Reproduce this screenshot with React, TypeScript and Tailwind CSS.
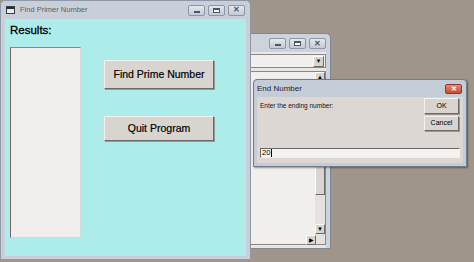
import React from "react";

function CaptionButtons() {
  return (
    <div className="flex items-center gap-[3px]">
      <div className="flex h-[11px] w-[17px] items-center justify-center rounded-[2px] border border-[#8c96a4] bg-gradient-to-b from-[#e4e8ee] to-[#c3cad4]">
        <div className="mt-[3px] h-[2px] w-[6px] border border-[#4b5563] bg-white" />
      </div>
      <div className="flex h-[11px] w-[17px] items-center justify-center rounded-[2px] border border-[#8c96a4] bg-gradient-to-b from-[#e4e8ee] to-[#c3cad4]">
        <div className="h-[5px] w-[7px] border border-[#4b5563] border-t-2 bg-white" />
      </div>
      <div className="flex h-[11px] w-[17px] items-center justify-center rounded-[2px] border border-[#8c96a4] bg-gradient-to-b from-[#e4e8ee] to-[#c3cad4] text-[8px] font-bold leading-none text-[#4b5563]">
        ✕
      </div>
    </div>
  );
}

function WinButton({ label, className }: { label: string; className: string }) {
  return (
    <div
      className={`flex items-center justify-center border border-t-[#f4f2f0] border-l-[#f4f2f0] border-r-[#6d6a68] border-b-[#6d6a68] bg-[#d8d4d0] shadow-[1px_1px_0_#9a9692] text-black ${className}`}
    >
      {label}
    </div>
  );
}

export default function App() {
  return (
    <div
      className="relative h-[262px] w-[474px] overflow-hidden bg-[#9f958b]"
      style={{ fontFamily: '"Liberation Sans", Arial, sans-serif' }}
    >
      {/* window behind */}
      <div className="absolute left-[236px] top-[33px] flex h-[216px] w-[95px] flex-col rounded-t-[5px] border border-[#7e8894] bg-[#cdd3dc]">
        <div className="flex h-[17px] items-center justify-end pr-[4px] pt-[2px]">
          <CaptionButtons />
        </div>
        <div className="mx-[4px] mt-[1px] flex flex-1 flex-col bg-[#e9e6e3] pb-[3px]">
          <div className="mt-[2px] flex h-[14px] items-center justify-end border border-[#8a8784] bg-[#f2f0ee] pr-[1px]">
            <div className="flex h-[11px] w-[11px] items-center justify-center border border-t-white border-l-white border-r-[#6d6a68] border-b-[#6d6a68] bg-[#d8d4d0] text-[6px] leading-none text-black">
              ▼
            </div>
          </div>
          <div className="mt-[3px] flex flex-1 border border-[#8a8784] bg-[#f1efed]">
            <div className="flex-1" />
            <div className="flex w-[10px] flex-col bg-[#e4e1de]">
              <div className="flex h-[10px] items-center justify-center border border-t-white border-l-white border-r-[#6d6a68] border-b-[#6d6a68] bg-[#d8d4d0] text-[6px] leading-none">
                ▲
              </div>
              <div className="h-[113px] border border-t-white border-l-white border-r-[#6d6a68] border-b-[#6d6a68] bg-[#d8d4d0]" />
              <div className="flex-1" />
              <div className="flex h-[10px] items-center justify-center border border-t-white border-l-white border-r-[#6d6a68] border-b-[#6d6a68] bg-[#d8d4d0] text-[6px] leading-none">
                ▼
              </div>
              <div className="h-[10px]" />
            </div>
          </div>
          <div className="relative -mt-[10px] flex h-[10px] justify-end pr-[10px]">
            <div className="flex h-[10px] w-[10px] items-center justify-center border border-t-white border-l-white border-r-[#6d6a68] border-b-[#6d6a68] bg-[#d8d4d0] text-[6px] leading-none">
              ▶
            </div>
          </div>
        </div>
      </div>

      {/* main window */}
      <div className="absolute left-0 top-0 flex h-[260px] w-[251px] flex-col rounded-t-[5px] border border-[#8e98a6] bg-[#c8cfd9]">
        <div className="flex h-[18px] items-center pl-[5px] pr-[5px]">
          <div className="relative mr-[5px] h-[8px] w-[9px] border border-[#3a3f47] bg-[#e9edf2]">
            <div className="absolute left-0 top-0 h-[2px] w-full bg-[#2a2f37]" />
          </div>
          <span className="text-[7.5px] text-[#5a626e]">Find Primer Number</span>
          <div className="ml-auto">
            <CaptionButtons />
          </div>
        </div>
        <div className="mx-[4px] mb-[3px] flex flex-1 bg-[#aeeceb] pl-[5px] pt-[4px]">
          <div className="flex flex-col">
            <span className="text-[11.5px] leading-[14px] text-black [-webkit-text-stroke:0.3px_black]">Results:</span>
            <div className="mt-[10px] h-[191px] w-[71px] border border-t-[#8a8784] border-l-[#6a6764] border-r-[#d9d6d3] border-b-[#d9d6d3] bg-[#f1eeeb]" />
          </div>
          <div className="ml-[23px] flex flex-col pt-[37px]">
            <WinButton label="Find Prime Number" className="h-[29px] w-[110px] text-[10.5px] [-webkit-text-stroke:0.2px_black]" />
            <WinButton label="Quit Program" className="mt-[27px] h-[25px] w-[110px] text-[10.5px] [-webkit-text-stroke:0.2px_black]" />
          </div>
        </div>
      </div>

      {/* dialog */}
      <div className="absolute left-[253px] top-[79px] flex h-[88px] w-[214px] flex-col rounded-t-[4px] border border-[#727c88] bg-[#c3ccd7] shadow-[1px_1px_2px_rgba(0,0,0,0.4)]">
        <div className="flex h-[17px] items-center pl-[3px] pr-[4px]">
          <span className="text-[8px] text-[#1e2430]">End Number</span>
          <div className="ml-auto flex h-[10px] w-[17px] items-center justify-center rounded-[2px] border border-[#8a3a2e] bg-gradient-to-b from-[#e48a74] to-[#c44a34] text-[7px] font-bold leading-none text-white">
            ✕
          </div>
        </div>
        <div className="mx-[3px] mb-[3px] flex flex-1 flex-col bg-[#dcd7d3] px-[3px] pt-[1px]">
          <div className="flex">
            <span className="mt-[3px] text-[6.5px] text-[#111]">Enter the ending number:</span>
            <div className="ml-auto mr-[1px] flex flex-col gap-[2px]">
              <WinButton label="OK" className="h-[16px] w-[35px] text-[7px]" />
              <WinButton label="Cancel" className="h-[15px] w-[35px] text-[7px]" />
            </div>
          </div>
          <div className="mt-[17px] flex h-[10px] items-center border border-t-[#6a6764] border-l-[#6a6764] border-r-[#f2f0ee] border-b-[#f2f0ee] bg-[#f4f3f1] pl-[1px] text-[7.5px] leading-none text-black">
            20<span className="ml-[1px] h-[8px] w-px bg-black" />
          </div>
        </div>
      </div>
    </div>
  );
}
